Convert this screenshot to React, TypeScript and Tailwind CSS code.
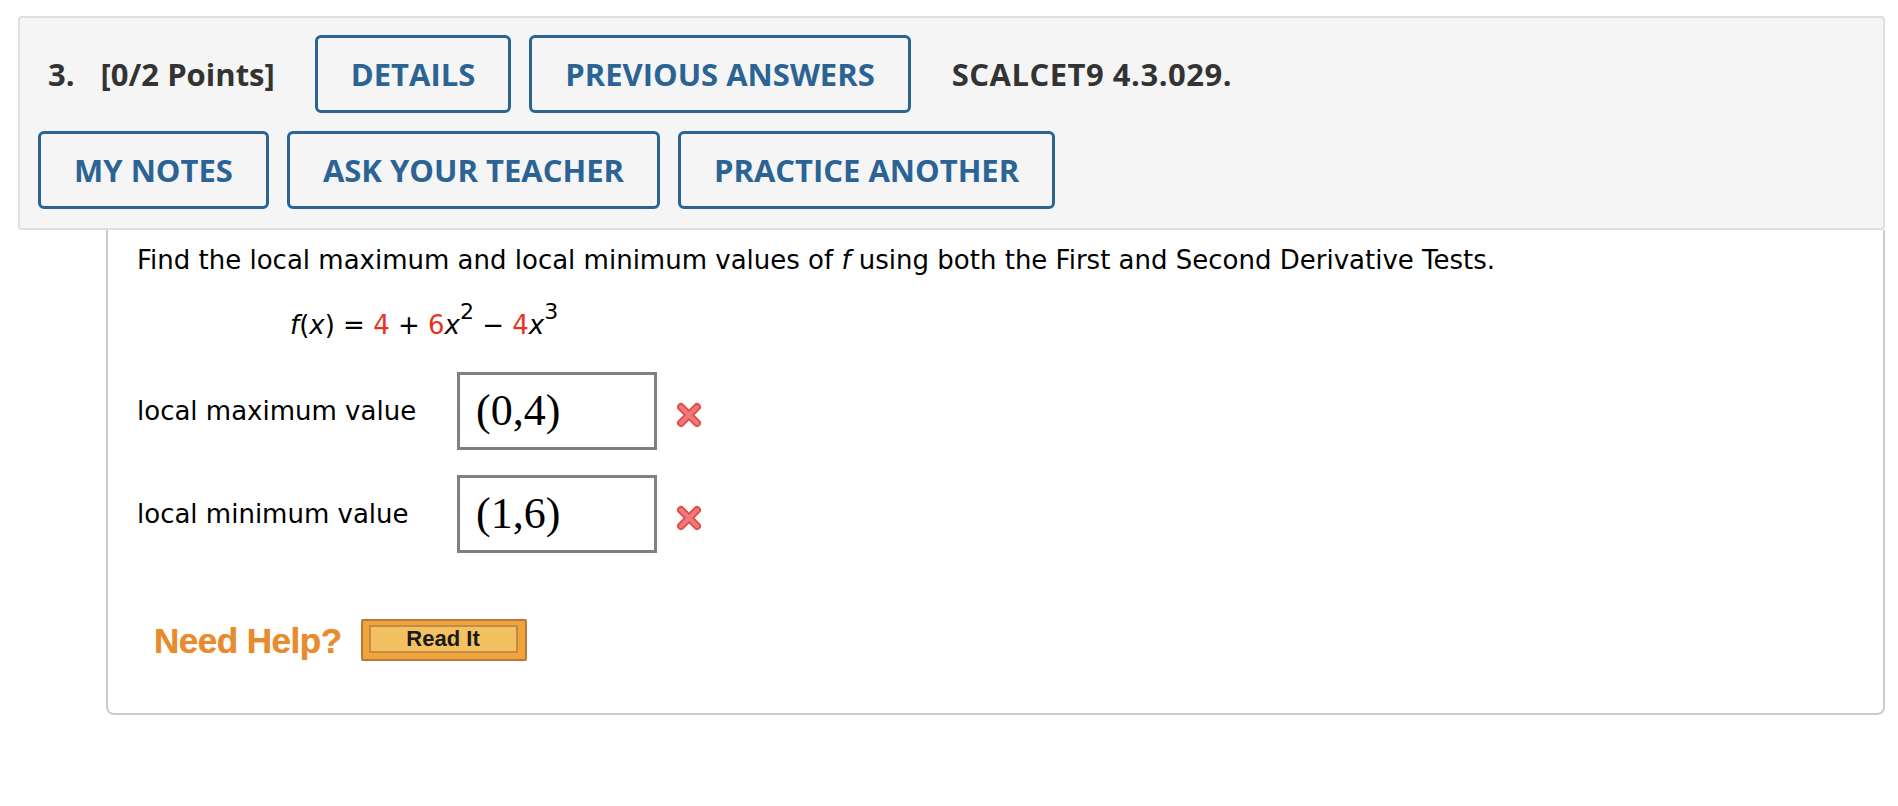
import React from 'react'

const headerFont = { fontFamily: '"Open Sans", "Liberation Sans", sans-serif' }

function OutlineButton({ label }: { label: string }) {
  return (
    <div className="flex h-[78px] items-center rounded-md border-[3px] border-[#2b6494] px-[33px] text-[31px] font-bold text-[#2b6494]">
      {label}
    </div>
  )
}

function WrongMark() {
  return (
    <svg width="28" height="28" viewBox="0 0 28 28" className="shrink-0">
      <g strokeLinecap="round">
        <path d="M6 6 L22 22 M22 6 L6 22" stroke="#e24f4f" strokeWidth="8" />
        <path d="M6 6 L22 22 M22 6 L6 22" stroke="#f07878" strokeWidth="4" />
      </g>
    </svg>
  )
}

function AnswerRow({ label, value }: { label: string; value: string }) {
  return (
    <div className="flex items-center">
      <div className="w-[320px]">{label}</div>
      <div className="flex h-[78px] w-[200px] items-center border-[3px] border-[#808080] pl-[16px] font-['Liberation_Serif',serif] text-[44px] leading-none text-black">
        {value}
      </div>
      <div className="ml-[18px] mt-[8px]">
        <WrongMark />
      </div>
    </div>
  )
}

export default function App() {
  return (
    <div className="min-h-screen bg-white pl-[18px] pt-4">
      <div
        className="w-[1867px] rounded border-2 border-[#dfdfdf] bg-[#f5f5f5] pb-[19px] pl-[18px] pt-[17px] text-[#333]"
        style={headerFont}
      >
        <div className="flex items-center">
          <div className="ml-[10px] mr-[40px] flex gap-[26px] text-[31px] font-bold">
            <span>3.</span>
            <span>[0/2 Points]</span>
          </div>
          <div className="flex gap-[18px]">
            <OutlineButton label="DETAILS" />
            <OutlineButton label="PREVIOUS ANSWERS" />
          </div>
          <div className="ml-[41px] text-[31px] font-bold tracking-[0.5px]">SCALCET9 4.3.029.</div>
        </div>
        <div className="mt-[18px] flex gap-[18px]">
          <OutlineButton label="MY NOTES" />
          <OutlineButton label="ASK YOUR TEACHER" />
          <OutlineButton label="PRACTICE ANOTHER" />
        </div>
      </div>

      <div className="ml-[88px] h-[485px] w-[1779px] rounded-b-lg border-x-2 border-b-2 border-[#cccccc] pl-[29px] pt-[12px] font-['DejaVu_Sans',sans-serif] text-[26px] leading-[36px] text-black">
        <p>
          Find the local maximum and local minimum values of <i>f</i> using both the First and Second
          Derivative Tests.
        </p>
        <p className="ml-[153px] mt-[29px]">
          <i>f</i>(<i>x</i>) = <span className="text-[#e8341f]">4</span> +{' '}
          <span className="text-[#e8341f]">6</span>
          <i>x</i>
          <sup className="top-[-0.7em] text-[22px]">2</sup> − <span className="text-[#e8341f]">4</span>
          <i>x</i>
          <sup className="top-[-0.7em] text-[22px]">3</sup>
        </p>
        <div className="mt-[29px]">
          <AnswerRow label="local maximum value" value="(0,4)" />
        </div>
        <div className="mt-[25px]">
          <AnswerRow label="local minimum value" value="(1,6)" />
        </div>
        <div className="ml-[17px] mt-[66px] flex items-center">
          <span className="font-['Liberation_Sans',sans-serif] text-[35px] font-bold leading-none tracking-[-0.5px] text-[#e88a2e] [text-shadow:0_0_1px_#f0b070]">
            Need Help?
          </span>
          <div className="ml-[19px] flex h-[42px] w-[166px] rounded-[2px] border-2 border-[#b8783a] bg-[#f0a43c] pb-[6px] pl-[6px] pr-[7px] pt-[4px]">
            <div className="flex flex-1 items-center justify-center border-2 border-[#c48a45] bg-[#f3c162] font-['Liberation_Sans',sans-serif] text-[22px] font-bold leading-none text-[#1a1a1a]">
              Read It
            </div>
          </div>
        </div>
      </div>
    </div>
  )
}
